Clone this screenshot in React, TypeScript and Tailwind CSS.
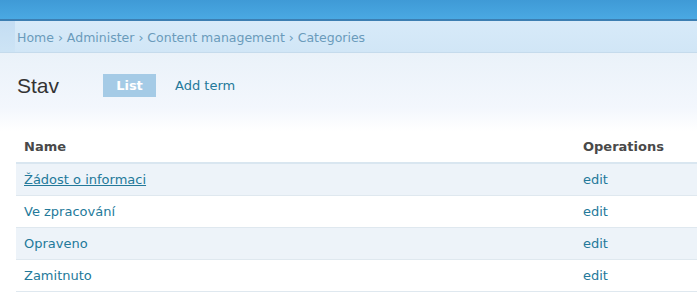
import React from "react";

const rows = ["Žádost o informaci", "Ve zpracování", "Opraveno", "Zamitnuto"];

export default function App() {
  return (
    <div className="w-[697px] h-[306px] overflow-hidden bg-white" style={{ fontFamily: '"DejaVu Sans", Verdana, sans-serif' }}>
      <div className="h-[21px] bg-gradient-to-b from-[#3f9ad6] to-[#4aa9e3] border-b-2 border-[#3c7eb2]" />
      <div className="h-[32px] flex border-b border-[#c5dbec] bg-gradient-to-b from-[#d7eaf9] to-[#d1e6f6]">
        <div className="w-[15px] bg-gradient-to-b from-[#c4ddf3] to-[#cde4f5]" />
        <div className="flex-1 flex items-center pt-[3px] pl-[2px] text-[12.5px] text-[#6a9bbb]">
          Home › Administer › Content management › Categories
        </div>
      </div>
      <div className="h-[78px] bg-gradient-to-b from-[#eaf2f9] via-[#f3f7fd] via-70% to-white pt-[21px] px-[17px] flex items-start">
        <div className="h-[23px] flex items-center w-[86px]">
          <h1 className="text-[21px] leading-[23px] text-[#333]" style={{ fontFamily: '"Liberation Sans", Arial, sans-serif' }}>Stav</h1>
        </div>
        <span className="bg-[#a5cbe6] text-white font-bold text-[13px] h-[23px] w-[53px] flex items-center justify-center">List</span>
        <span className="ml-[19px] h-[23px] flex items-center text-[13px] text-[#23799a]">Add term</span>
      </div>
      <div className="pl-4">
        <div className="flex h-[33px] pt-[1px] items-center border-b-2 border-[#d9e6f0] text-[13px] font-bold text-[#494949]">
          <div className="w-[567px] pl-2">Name</div>
          <div>Operations</div>
        </div>
        {rows.map((r, i) => (
          <div key={r} className={`flex h-[32px] pt-[1px] items-center border-b border-[#dfe8ef] text-[13px] text-[#23799a] ${i % 2 === 0 ? "bg-[#edf3f9]" : "bg-white"}`}>
            <div className={`w-[567px] pl-2 ${i === 0 ? "underline" : ""}`}>{r}</div>
            <div>edit</div>
          </div>
        ))}
      </div>
    </div>
  );
}
